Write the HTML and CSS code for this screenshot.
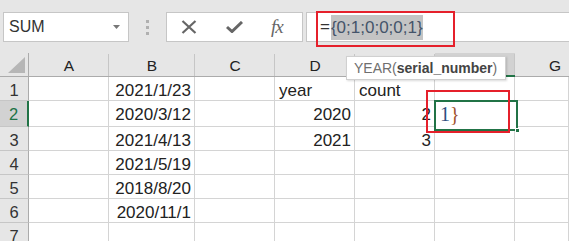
FILE: index.html
```html
<!DOCTYPE html>
<html lang="en">
<head>
  <meta charset="UTF-8">
  <title>YEAR formula</title>
  <link rel="stylesheet" href="styles.css">
</head>
<body>

  <div class="toolbar">
    <div class="namebox">
      <span>SUM</span>
      <svg class="drop" width="7" height="4" viewBox="0 0 7 4"><path d="M0 0h7L3.5 4z" fill="#777"/></svg>
    </div>
    <div class="grip"><i></i><i></i><i></i></div>
    <div class="fxbox">
      <svg width="16" height="14" viewBox="0 0 16 14"><path d="M1.5 1l13 12M14.5 1l-13 12" stroke="#666" stroke-width="2.2" fill="none"/></svg>
      <svg width="17" height="12" viewBox="0 0 17 12"><path d="M1 6l5 4.5L16 1" stroke="#666" stroke-width="3" fill="none"/></svg>
      <span class="fx">fx</span>
    </div>
    <div class="formula">
      <span class="eq">=</span><span class="sel">{0;1;0;0;0;1}</span>
    </div>
  </div>

  <div class="sheet">
    <!-- header row -->
    <div class="corner"><svg width="17" height="16" viewBox="0 0 17 16"><path d="M17 0v16H0z" fill="#b6b6b6"/></svg></div>
    <div class="colhead">A</div>
    <div class="colhead">B</div>
    <div class="colhead">C</div>
    <div class="colhead">D</div>
    <div class="colhead">E</div>
    <div class="colhead active">F</div>
    <div class="colhead cut">G</div>

    <div class="rowhead">1</div>
    <div class="cell"></div>
    <div class="cell num">2021/1/23</div>
    <div class="cell"></div>
    <div class="cell">year</div>
    <div class="cell">count</div>
    <div class="cell"></div>
    <div class="cell"></div>

    <div class="rowhead active">2</div>
    <div class="cell"></div>
    <div class="cell num">2020/3/12</div>
    <div class="cell"></div>
    <div class="cell num">2020</div>
    <div class="cell num">2</div>
    <div class="cell"></div>
    <div class="cell"></div>

    <div class="rowhead">3</div>
    <div class="cell"></div>
    <div class="cell num">2021/4/13</div>
    <div class="cell"></div>
    <div class="cell num">2021</div>
    <div class="cell num">3</div>
    <div class="cell"></div>
    <div class="cell"></div>

    <div class="rowhead">4</div>
    <div class="cell"></div>
    <div class="cell num">2021/5/19</div>
    <div class="cell"></div>
    <div class="cell"></div>
    <div class="cell"></div>
    <div class="cell"></div>
    <div class="cell"></div>

    <div class="rowhead">5</div>
    <div class="cell"></div>
    <div class="cell num">2018/8/20</div>
    <div class="cell"></div>
    <div class="cell"></div>
    <div class="cell"></div>
    <div class="cell"></div>
    <div class="cell"></div>

    <div class="rowhead">6</div>
    <div class="cell"></div>
    <div class="cell num">2020/11/1</div>
    <div class="cell"></div>
    <div class="cell"></div>
    <div class="cell"></div>
    <div class="cell"></div>
    <div class="cell"></div>

    <div class="rowhead">7</div>
    <div class="cell"></div>
    <div class="cell"></div>
    <div class="cell"></div>
    <div class="cell"></div>
    <div class="cell"></div>
    <div class="cell"></div>
    <div class="cell"></div>
  </div>

  <!-- overlays -->
  <div class="mark mark-formula"></div>
  <div class="tooltip">YEAR(<b>serial_number</b>)</div>
  <div class="editor"><span class="one">1</span><span class="brace">}</span><i class="handle"></i></div>
  <div class="mark mark-cell"></div>

</body>
</html>
```

FILE: styles.css
```css
* {
  margin: 0;
  padding: 0;
  box-sizing: border-box;
}

body {
  width: 569px;
  height: 241px;
  overflow: hidden;
  position: relative;
  background: #fff;
  font-family: 'Liberation Sans', Arial, sans-serif;
  color: #222;
}

/* formula bar */
.toolbar {
  height: 53px;
  background: #e6e6e6;
  display: flex;
  align-items: flex-start;
  padding: 12px 0 0 3px;
}

.namebox {
  width: 126px;
  height: 30px;
  background: #fff;
  border: 1px solid #c6c6c6;
  display: flex;
  align-items: center;
  justify-content: space-between;
  padding: 0 8px 0 5px;
  font-size: 16px;
  color: #333;
}

.grip {
  display: flex;
  flex-direction: column;
  gap: 3px;
  margin: 8px 0 0 17px;
}

.grip i {
  width: 3px;
  height: 3px;
  background: #b0b0b0;
}

.fxbox {
  width: 137px;
  height: 30px;
  margin-left: 17px;
  background: #fff;
  border: 1px solid #c6c6c6;
  display: flex;
  align-items: center;
  padding-left: 14px;
}

.fxbox svg:nth-child(2) {
  margin-left: 29px;
}

.fx {
  margin-left: 28px;
  font-family: 'Liberation Serif', 'Times New Roman', serif;
  font-style: italic;
  font-size: 19px;
  color: #666;
  letter-spacing: -1px;
}

.formula {
  flex: 1;
  height: 30px;
  margin-left: 3px;
  background: #fff;
  border: 1px solid #c6c6c6;
  border-right: none;
  display: flex;
  align-items: center;
  padding-left: 13px;
  font-size: 17px;
  color: #44546a;
}

.eq {
  color: #333;
}

.sel {
  background: #c4c4c4;
  line-height: 25px;
  margin-left: 1px;
}

/* grid */
.sheet {
  display: grid;
  grid-template-columns: 29px 80px 86px 80px 80px 80px 80px 1fr;
  grid-template-rows: 24px 24px 26px 24px 24px 24px 24px 24px;
}

.corner,
.colhead {
  background: #e6e6e6;
  border-bottom: 1px solid #ababab;
}

.corner {
  border-right: 1px solid #ababab;
  display: flex;
  align-items: flex-end;
  justify-content: flex-end;
  padding: 0 3px 3px 0;
}

.colhead {
  position: relative;
  text-align: center;
  font-size: 15.5px;
  line-height: 23px;
  padding-top: 1px;
  color: #222;
}

.colhead::after {
  content: '';
  position: absolute;
  right: 0;
  top: 1px;
  bottom: 0;
  width: 1px;
  background: #c6c6c6;
}

/* G is cut off by the window, keep its letter where an 80px column would center it */
.colhead.cut {
  padding-left: 26px;
}

.colhead.cut::after {
  display: none;
}

.colhead.active {
  background: #d2d2d2;
  border-bottom: 2px solid #217346;
}

.rowhead {
  background: #e6e6e6;
  border-right: 1px solid #ababab;
  border-bottom: 1px solid #c6c6c6;
  text-align: center;
  font-size: 16.5px;
  line-height: 20px;
  padding-top: 3px;
  color: #333;
}

.rowhead.active {
  background: #d2d2d2;
  border-right: 2px solid #217346;
  color: #217346;
}

.cell {
  border-right: 1px solid #d4d4d4;
  border-bottom: 1px solid #d4d4d4;
  font-size: 17px;
  line-height: 20px;
  padding: 4px 3px 0 4px;
  white-space: nowrap;
}

.cell.num {
  text-align: right;
}

/* overlays */
.mark {
  position: absolute;
  border: 2px solid #e5202b;
}

.mark-formula {
  left: 316px;
  top: 11px;
  width: 139px;
  height: 36px;
}

.mark-cell {
  left: 426px;
  top: 90px;
  width: 84px;
  height: 43px;
}

.tooltip {
  position: absolute;
  left: 346px;
  top: 56px;
  width: 160px;
  height: 24px;
  background: #fff;
  border: 1px solid #d0d0d0;
  box-shadow: 1px 1px 2px rgba(0, 0, 0, 0.15);
  font-size: 14px;
  line-height: 22px;
  padding-left: 7px;
  color: #6f6f6f;
}

.tooltip b {
  color: #444;
}

.editor {
  position: absolute;
  left: 434px;
  top: 100px;
  width: 84px;
  height: 31px;
  border: 2px solid #217346;
  background: #fff;
  font-family: 'Liberation Serif', 'Times New Roman', serif;
  font-size: 20px;
  line-height: 25px;
  padding-left: 4px;
}

.one {
  color: #2f4f80;
}

.brace {
  color: #a0522d;
  font-weight: 300;
}

.handle {
  position: absolute;
  right: -4px;
  bottom: -4px;
  width: 5px;
  height: 5px;
  background: #217346;
  border: 1px solid #fff;
}
```
